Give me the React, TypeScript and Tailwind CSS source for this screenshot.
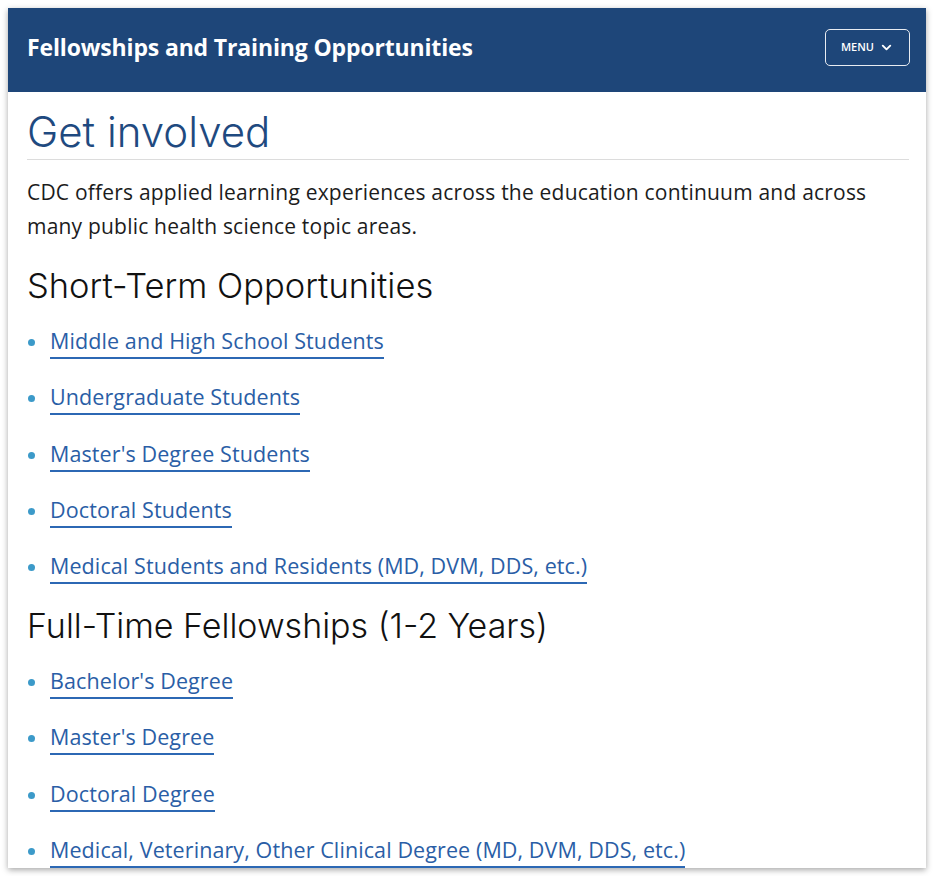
import { ChevronDown } from "lucide-react";

const shortTerm = [
  "Middle and High School Students",
  "Undergraduate Students",
  "Master's Degree Students",
  "Doctoral Students",
  "Medical Students and Residents (MD, DVM, DDS, etc.)",
];

const fullTime = [
  "Bachelor's Degree",
  "Master's Degree",
  "Doctoral Degree",
  "Medical, Veterinary, Other Clinical Degree (MD, DVM, DDS, etc.)",
];

const body = { fontFamily: "'Open Sans', Lato, sans-serif" };
const heading = { fontFamily: "Inter, 'Noto Sans', sans-serif" };

function LinkList({ items }: { items: string[] }) {
  return (
    <ul className="flex flex-col gap-[23.25px] mt-[18px]">
      {items.map((item) => (
        <li key={item} className="flex items-center h-[33px]">
          <span className="w-[7px] h-[7px] rounded-full bg-[#3c9ac9] ml-[1px] mr-[15px] flex-shrink-0" />
          <a
            href="#"
            className="text-[21.5px] tracking-[0.1px] leading-[30px] text-[#2a5ea6] border-b-2 border-[#2c68b4] pb-[1px]"
          >
            {item}
          </a>
        </li>
      ))}
    </ul>
  );
}

export default function App() {
  return (
    <div className="min-h-screen bg-white p-2" style={body}>
      <div className="w-[918px] h-[860px] overflow-hidden bg-white shadow-[0_2px_6px_rgba(0,0,0,0.35)]">
        <header className="h-[84px] bg-[#1e4679] flex items-start justify-between pl-[19px] pr-[16px] pt-[21px]">
          <h1 className="text-white text-[23px] leading-[36px] font-bold tracking-[-0.15px]">
            Fellowships and Training Opportunities
          </h1>
          <button className="w-[85px] h-[37px] border border-[#e8ecf2] rounded-[5px] text-white text-[11px] font-semibold flex items-center justify-center gap-[5px]">
            MENU
            <ChevronDown size={15} strokeWidth={3} />
          </button>
        </header>
        <main className="px-[19px] pr-[17px]">
          <h2
            className="text-[42px] font-light text-[#1f4a80] leading-[52px] pt-[14px] pb-[1px] border-b border-[#dcdcdc]"
            style={heading}
          >
            Get involved
          </h2>
          <p className="text-[21px] tracking-[0.2px] leading-[34px] text-[#1c1c1c] mt-[15px]">
            CDC offers applied learning experiences across the education continuum and across many public
            health science topic areas.
          </p>
          <h3 className="text-[34.5px] font-light text-[#111] leading-[44px] mt-[21px]" style={heading}>
            Short-Term Opportunities
          </h3>
          <LinkList items={shortTerm} />
          <h3 className="text-[34px] font-light text-[#111] leading-[44px] mt-[20px]" style={heading}>
            Full-Time Fellowships (1-2 Years)
          </h3>
          <LinkList items={fullTime} />
        </main>
      </div>
    </div>
  );
}
